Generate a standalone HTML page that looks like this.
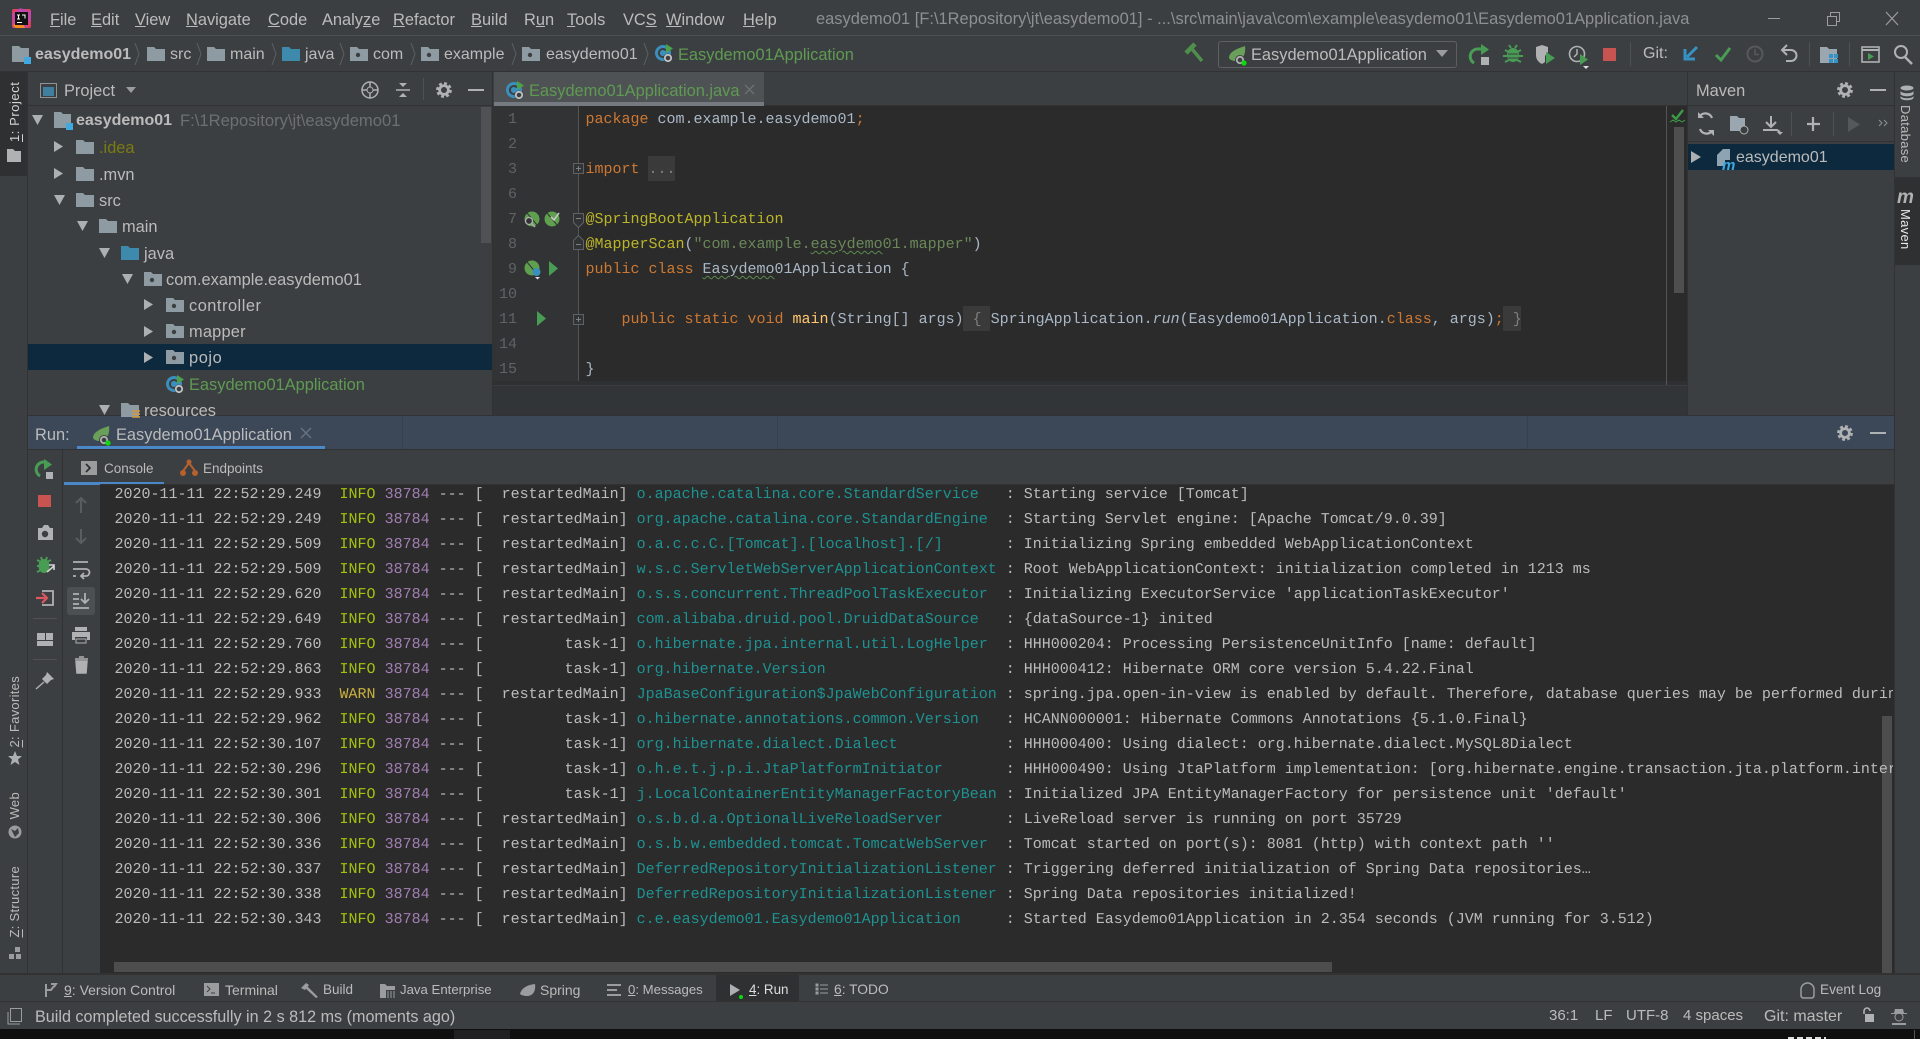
<!DOCTYPE html>
<html><head><meta charset="utf-8"><title>IntelliJ IDEA</title>
<style>
html,body{margin:0;padding:0;width:1920px;height:1039px;overflow:hidden;background:#3c3f41}
.b{position:absolute}
.t{position:absolute;white-space:pre;font:16.4px/20px "Liberation Sans",sans-serif;color:#bbb;margin-top:1px}
.u{font-size:16px}
.m{position:absolute;white-space:pre;font:15px/25px "Liberation Mono",monospace;color:#a9b7c6;text-rendering:geometricPrecision}
.s{font-size:14px;margin-top:0}.g{color:#5f9a52}.w{color:#8d9092}
.v{position:absolute;writing-mode:vertical-rl;white-space:pre;font:13px/18px "Liberation Sans",sans-serif;letter-spacing:.3px;color:#bbb}
.r{transform:rotate(180deg)}
.k{color:#cc7832}.a{color:#bbb529}.q{color:#6a8759}.f{color:#ffc66d}
.wv{text-decoration:underline wavy #5c8a4e 1px;text-underline-offset:2px}
#log{left:114.5px;top:482px;width:1778px;height:460px;overflow:hidden;color:#bbb;position:absolute;font:15px/25px "Liberation Mono",monospace;white-space:pre;text-rendering:geometricPrecision}
#log div{height:25px}
.i{color:#a5c10f}.wn{color:#c9b03c}.p{color:#a37fb4}.c{color:#1f9191}
.n{position:absolute;width:30px;text-align:right;left:487px;font:15px/25px "Liberation Mono",monospace;color:#606366}
svg{position:absolute;left:0;top:0}
</style></head>
<body>
<!-- structural backgrounds -->
<div class="b" style="left:0;top:35px;width:1920px;height:1px;background:#4d5052"></div>
<div class="b" style="left:0;top:71px;width:1920px;height:1px;background:#323232"></div>
<div class="b" style="left:0;top:72px;width:27px;height:104px;background:#2e3031"></div>
<div class="b" style="left:27px;top:72px;width:1px;height:901px;background:#323232"></div>
<div class="b" style="left:28px;top:105px;width:464px;height:1px;background:#323232"></div>
<div class="b" style="left:28px;top:344px;width:464px;height:26px;background:#0d293e"></div>
<div class="b" style="left:481px;top:107px;width:10px;height:136px;background:#4f5254"></div>
<div class="b" style="left:492px;top:72px;width:1px;height:343px;background:#323232"></div>
<div class="b" style="left:494px;top:72px;width:270px;height:30px;background:#4e5254"></div>
<div class="b" style="left:494px;top:102px;width:270px;height:4px;background:#747a80"></div>
<div class="b" style="left:764px;top:105px;width:923px;height:1px;background:#323232"></div>
<div class="b" style="left:493px;top:106px;width:1194px;height:275px;background:#2b2b2b"></div>
<div class="b" style="left:493px;top:106px;width:85px;height:279px;background:#313335"></div>
<div class="b" style="left:578px;top:106px;width:1px;height:279px;background:#555"></div>
<div class="b" style="left:493px;top:381px;width:1194px;height:4px;background:#2f3031"></div>
<div class="b" style="left:493px;top:385px;width:1194px;height:30px;background:#323537;border-top:1px solid #3a3c3e;box-sizing:border-box"></div>
<div class="b" style="left:1666px;top:106px;width:1px;height:279px;background:#555"></div>
<div class="b" style="left:1674px;top:127px;width:10px;height:166px;background:#4f4f4f"></div>
<div class="b" style="left:648px;top:156px;width:27px;height:25px;background:#3a3a3a"></div>
<div class="b" style="left:963px;top:306px;width:27px;height:25px;background:#3a3a3a"></div>
<div class="b" style="left:1503px;top:306px;width:18px;height:25px;background:#3a3a3a"></div>
<div class="b" style="left:1687px;top:72px;width:1px;height:343px;background:#323232"></div>
<div class="b" style="left:1688px;top:105px;width:206px;height:1px;background:#323232"></div>
<div class="b" style="left:1688px;top:141px;width:206px;height:1px;background:#323232"></div>
<div class="b" style="left:1688px;top:144px;width:206px;height:26px;background:#0d293e"></div>
<div class="b" style="left:1894px;top:72px;width:1px;height:901px;background:#323232"></div>
<div class="b" style="left:1895px;top:177px;width:25px;height:88px;background:#2e3031"></div>
<!-- run panel -->
<div class="b" style="left:28px;top:415px;width:1866px;height:1px;background:#323232"></div>
<div class="b" style="left:28px;top:416px;width:1866px;height:33px;background:#3c4757"></div>
<div class="b" style="left:28px;top:449px;width:1866px;height:1px;background:#323232"></div>
<div class="b" style="left:402px;top:416px;width:1px;height:33px;background:#363f4c"></div>
<div class="b" style="left:777px;top:416px;width:1px;height:33px;background:#363f4c"></div>
<div class="b" style="left:1527px;top:416px;width:1px;height:33px;background:#363f4c"></div>
<div class="b" style="left:77px;top:446px;width:248px;height:3px;background:#4a88c7"></div>
<div class="b" style="left:64px;top:482px;width:100px;height:3px;background:#4a88c7"></div>
<div class="b" style="left:100px;top:484px;width:1794px;height:1px;background:#323232"></div>
<div class="b" style="left:100px;top:485px;width:1794px;height:488px;background:#2b2b2b"></div>
<div class="b" style="left:62px;top:450px;width:1px;height:523px;background:#323232"></div>
<div class="b" style="left:114px;top:962px;width:1218px;height:10px;background:#4d4d4d"></div>
<div class="b" style="left:1882px;top:716px;width:10px;height:257px;background:#4d4d4d"></div>
<div class="b" style="left:67px;top:587px;width:28px;height:28px;border-radius:3px;background:#4c5052"></div>
<div class="b" style="left:33px;top:618px;width:24px;height:1px;background:#515151"></div>
<div class="b" style="left:33px;top:659px;width:24px;height:1px;background:#515151"></div>
<!-- bottom -->
<div class="b" style="left:0;top:973px;width:1920px;height:2px;background:#323232"></div>
<div class="b" style="left:716px;top:975px;width:83px;height:26px;background:#2e3031"></div>
<div class="b" style="left:0;top:1001px;width:1920px;height:1px;background:#323232"></div>
<div class="b" style="left:0;top:1029px;width:1920px;height:10px;background:#0f0f10"></div>
<div class="b" style="left:454px;top:1030px;width:56px;height:9px;background:#202022"></div>
<div class="b" style="left:1914px;top:1030px;width:1px;height:9px;background:#555"></div>
<div class="b" style="left:1788px;top:1037px;width:38px;height:2px;background:repeating-linear-gradient(90deg,#ddd 0 6px,transparent 6px 9px)"></div>
<!-- toolbar separators -->
<div class="b" style="left:1630px;top:42px;width:1px;height:24px;background:#515151"></div>
<div class="b" style="left:1809px;top:42px;width:1px;height:24px;background:#515151"></div>
<div class="b" style="left:1849px;top:42px;width:1px;height:24px;background:#515151"></div>
<div class="b" style="left:423px;top:78px;width:1px;height:22px;background:#515151"></div>
<div class="b" style="left:1791px;top:112px;width:1px;height:24px;background:#515151"></div>
<div class="b" style="left:1833px;top:112px;width:1px;height:24px;background:#515151"></div>
<div class="b" style="left:1218px;top:41px;width:237px;height:25px;border:1px solid #5e6060;border-radius:3px"></div>

<svg width="1920" height="1039" xmlns="http://www.w3.org/2000/svg" fill="none">
<defs>
<path id="fo" d="M0 0h7l2 2h9v12H0z" fill="#8f9ba3"/>
<g id="pk"><path d="M0 0h7l2 2h9v12H0z" fill="#8f9ba3"/><circle cx="8" cy="8" r="2.2" fill="#3c3f41"/></g>
<g id="mod"><path d="M0 0h7l2 2h8v14H0z" fill="#8f9ba3"/><rect x="12" y="11" width="7" height="7" fill="#3fa9e0"/></g>
<path id="down" d="M0 0h11L5.500 10z" fill="#adb0b2"/>
<path id="right" d="M0 0l9 5.500L0 11z" fill="#adb0b2"/>
<path id="chev" d="M0 0l4 11L0 22" stroke="#5d6062" stroke-width="1"/>
<g id="cls"><circle cx="8" cy="9" r="8" fill="#3a8fbd"/><path d="M11 6.500a4 4 0 1 0 0 5" stroke="#3c3f41" stroke-width="2"/><path d="M11 0l7 4.500-7 4.500z" fill="#4ca24a"/><circle cx="13" cy="14" r="4.500" fill="#3c3f41"/><circle cx="13" cy="14" r="3.200" stroke="#c0c2c4" stroke-width="1.800"/></g>
<g id="sp"><path d="M1 12C1 6 8 3 17 0c1 8-2 14-9 15-3 0-6-1-7-3z" fill="#6a9f5a"/><circle cx="12" cy="14" r="5" fill="#3c3f41"/><circle cx="12" cy="14" r="3.200" stroke="#afb1b3" stroke-width="1.800"/><circle cx="16" cy="17" r="2.600" fill="#0adb0a"/></g>
<g id="gear"><circle cx="8" cy="8" r="6.400" stroke="#afb1b3" stroke-width="3" stroke-dasharray="2.800 2.200"/><circle cx="8" cy="8" r="4.400" stroke="#afb1b3" stroke-width="2.800"/></g>
</defs>

<!-- logo -->
<rect x="12" y="9" width="19" height="19" rx="2" fill="#f0405e" opacity=".9"/>
<path d="M12 14L20 8l11 3v8l-5 9H13z" fill="#b04bd8" opacity=".6"/>
<path d="M13 26l6-9 6 11h-9z" fill="#f58a1f"/>
<rect x="15" y="12" width="13" height="13" fill="#111"/>
<path d="M17 15h3M18.500 15v4M17 19h3M22 15h3v3.500M17 22.500h5" stroke="#fff" stroke-width="1"/>

<!-- window controls -->
<path d="M1768 18.500h12" stroke="#9a9c9e"/>
<path d="M1827.500 16.500h9v9h-9zM1830.500 16v-3.500h9v9H1837" stroke="#9a9c9e"/>
<path d="M1886 12l12 13M1898 12l-12 13" stroke="#9a9c9e" stroke-width="1.200"/>

<!-- breadcrumbs -->
<use href="#mod" x="12" y="46"/>
<use href="#chev" x="135" y="43"/>
<use href="#fo" x="147" y="47"/>
<use href="#chev" x="197" y="43"/>
<use href="#fo" x="207" y="47"/>
<use href="#chev" x="272" y="43"/>
<path d="M282 47h7l2 2h9v12h-18z" fill="#3d8aad"/>
<use href="#chev" x="340" y="43"/>
<use href="#pk" x="350" y="47"/>
<use href="#chev" x="411" y="43"/>
<use href="#pk" x="421" y="47"/>
<use href="#chev" x="512" y="43"/>
<use href="#pk" x="522" y="47"/>
<use href="#chev" x="644" y="43"/>
<use href="#cls" x="655" y="44"/>

<!-- right toolbar -->
<path d="M1192 49l10 12" stroke="#4e8f4c" stroke-width="3.400"/><path d="M1186 53l9-9" stroke="#4e8f4c" stroke-width="4.500"/>
<use href="#sp" x="1228" y="46"/>
<path d="M1436 50h12l-6 7z" fill="#9a9c9e"/>
<path d="M1474 63a7.500 7.500 0 0 1 4-14h5" stroke="#499c54" stroke-width="3"/><path d="M1481 44l8 5.500-8 5.500z" fill="#499c54"/><rect x="1481" y="57" width="8" height="8" fill="#afb1b3"/>
<ellipse cx="1513" cy="55" rx="6" ry="7" fill="#499c54"/><path d="M1505 50l4 2M1521 50l-4 2M1503 56h4M1523 56h-4M1505 62l4-2M1521 62l-4-2M1509 45l2 3M1517 45l-2 3" stroke="#499c54" stroke-width="2"/><path d="M1508 54h10M1508 58h10" stroke="#3c3f41"/>
<path d="M1536 47l6-2 6 2v5l-3 4v6l-3 2c-4-2-6-5-6-9z" fill="#afb1b3"/><path d="M1546 52l9 6-9 6z" fill="#499c54"/>
<circle cx="1577" cy="54" r="7.500" stroke="#afb1b3" stroke-width="1.600"/><path d="M1577 49v5l-3 3" stroke="#afb1b3" stroke-width="1.500"/><path d="M1580 54l8 5.500-8 5.500z" fill="#499c54"/><path d="M1583 66h6l-3 3z" fill="#ddd"/>
<rect x="1603" y="48" width="13" height="13" fill="#c75450"/>
<path d="M1697 47l-10 10M1685 49v10h10" stroke="#3592c4" stroke-width="3"/>
<path d="M1716 55l5 5 9-12" stroke="#499c54" stroke-width="3"/>
<circle cx="1755" cy="54" r="7.500" stroke="#565859" stroke-width="2"/><path d="M1755 49v5.500h4" stroke="#565859" stroke-width="1.600"/>
<path d="M1783 50h8a5 5 0 0 1 0 11h-5" stroke="#afb1b3" stroke-width="2"/><path d="M1787 45l-5 5 5 5" stroke="#afb1b3" stroke-width="2"/>
<path d="M1820 47h7l2 2h8v14h-17z" fill="#9aa7b0"/><rect x="1829" y="54" width="4" height="4" fill="#3592c4"/><rect x="1834" y="54" width="4" height="4" fill="#3592c4"/><rect x="1829" y="59" width="4" height="4" fill="#3592c4"/><rect x="1834" y="59" width="4" height="4" fill="#3592c4"/>
<rect x="1862" y="47" width="17" height="15" stroke="#afb1b3" stroke-width="1.600"/><path d="M1862 50h17" stroke="#afb1b3" stroke-width="2"/><path d="M1868 53l6 3.500-6 3.500z" fill="#499c54"/>
<circle cx="1901" cy="52" r="6" stroke="#afb1b3" stroke-width="2"/><path d="M1905 57l7 7" stroke="#afb1b3" stroke-width="2.400"/>

<!-- project header -->
<rect x="40.500" y="83.500" width="16" height="14" stroke="#8f9295"/><rect x="43" y="87" width="11" height="9" fill="#3f7fa0"/>
<path d="M126 87h10l-5 6z" fill="#9a9c9e"/>
<circle cx="370" cy="90" r="8" stroke="#afb1b3" stroke-width="1.500"/><circle cx="370" cy="90" r="3" stroke="#afb1b3" stroke-width="1"/><path d="M370 82v5M370 93v5M362 90h5M373 90h5" stroke="#afb1b3" stroke-width="1.500"/>
<path d="M396 90h14" stroke="#afb1b3" stroke-width="1.500"/><path d="M399 83h8l-4 4zM399 97h8l-4-4z" fill="#afb1b3"/>
<use href="#gear" x="436" y="82"/>
<path d="M468 90h16" stroke="#afb1b3" stroke-width="2"/>

<!-- tree -->
<use href="#down" x="32" y="115"/><use href="#mod" x="54" y="112"/>
<use href="#right" x="54" y="141"/><use href="#fo" x="76" y="140"/>
<use href="#right" x="54" y="168"/><use href="#fo" x="76" y="167"/>
<use href="#down" x="54" y="195"/><use href="#fo" x="76" y="193"/>
<use href="#down" x="77" y="221"/><use href="#fo" x="99" y="219"/>
<use href="#down" x="99" y="248"/><path d="M121 246h7l2 2h9v12h-18z" fill="#3d8aad"/>
<use href="#down" x="122" y="274"/><use href="#pk" x="144" y="272"/>
<use href="#right" x="144" y="299"/><use href="#pk" x="166" y="298"/>
<use href="#right" x="144" y="326"/><use href="#pk" x="166" y="324"/>
<use href="#right" x="144" y="352"/><use href="#pk" x="166" y="350"/>
<use href="#cls" x="166" y="375"/>
<use href="#down" x="99" y="405"/><use href="#fo" x="121" y="403"/><path d="M132 411h8M132 414h8M132 417h8" stroke="#d69a3c" stroke-width="1.500"/>

<!-- editor tab icon -->
<use href="#cls" x="506" y="81"/>
<path d="M745 85l9 9M754 85l-9 9" stroke="#6d7072" stroke-width="1.300"/>

<!-- gutter -->
<g stroke="#5f6264" fill="#313335">
<rect x="573.500" y="163.500" width="10" height="10"/>
<path d="M573.500 213.500h10v9l-5 5-5-5z"/>
<path d="M573.500 249.500h10v-9l-5-5-5 5z"/>
<rect x="573.500" y="314.500" width="10" height="10"/>
</g>
<path d="M576 168.500h5M578.500 166v5M576 218.500h5M576 244.500h5M576 319.500h5M578.500 317v5" stroke="#7d8082"/>
<circle cx="532" cy="219" r="7.500" fill="#5fa04e"/><path d="M527 213l10 12" stroke="#313335" stroke-width="1"/><circle cx="529" cy="221" r="3.500" fill="#313335" stroke="#afb1b3" stroke-width="1.300"/><path d="M532 224l3 3" stroke="#afb1b3" stroke-width="1.500"/>
<circle cx="552" cy="219" r="7.500" fill="#5fa04e"/><path d="M547 213l10 12" stroke="#313335" stroke-width="1"/><path d="M551 217l3 3 5-7" stroke="#c8c8c8" stroke-width="1.600"/>
<circle cx="532" cy="268" r="7.500" fill="#5fa04e"/><path d="M527 262l10 12" stroke="#313335" stroke-width="1"/><circle cx="536.500" cy="272" r="4" fill="#3a8fbd"/><path d="M535 277h5l-2.500 2.500z" fill="#ddd"/>
<path d="M549 261l9 7.500-9 7.500z" fill="#499c54"/>
<path d="M537 311l9 7.500-9 7.500z" fill="#499c54"/>

<!-- editor check -->
<path d="M1672 115l4 4 7-9" stroke="#3c9d46" stroke-width="2.400"/><path d="M1670 122l3-2 3 2 3-2 3 2 3-2" stroke="#3c9d46"/>

<!-- maven -->
<use href="#gear" x="1837" y="82"/>
<path d="M1870 90h16" stroke="#afb1b3" stroke-width="2"/>
<path d="M1712 118a7 7 0 0 0-12-2M1700 129a7 7 0 0 0 12 2" stroke="#afb1b3" stroke-width="2.200"/><path d="M1698 112v6h6M1714 136v-6h-6" fill="#afb1b3"/>
<path d="M1730 116h7l2 2h6v13h-15z" fill="#9aa7b0"/><circle cx="1744" cy="130" r="4" stroke="#afb1b3" fill="#3c3f41"/>
<path d="M1771 116v10M1766 122l5 5 5-5" stroke="#afb1b3" stroke-width="2"/><path d="M1763 130h14l3 2" stroke="#afb1b3" stroke-width="2"/><path d="M1777 132h6l-3 3z" fill="#afb1b3"/>
<path d="M1813 117v14M1807 124h13" stroke="#afb1b3" stroke-width="2.200"/>
<path d="M1848 117l12 7.500-12 7.500z" fill="#55585a"/>
<path d="M1879 120l3 3-3 3M1884 120l3 3-3 3" stroke="#8f9295"/>
<path d="M1691 151l10 6-10 6z" fill="#adb0b2"/>
<path d="M1723 149h7v11h-5v6h-8v-11z" fill="#8fa4b2"/>
<text x="1722" y="170" font-family="Liberation Sans" font-size="15" font-weight="bold" font-style="italic" fill="#3fa9e0">m</text>

<!-- right stripe icons -->
<ellipse cx="1907" cy="88" rx="6.500" ry="2.500" fill="#adb0b2"/><path d="M1900.500 91c1 3 12 3 13 0v3c-1 3-12 3-13 0zM1900.500 96c1 3 12 3 13 0v2c-1 3-12 3-13 0z" fill="#adb0b2"/>
<text x="1897" y="203" font-family="Liberation Sans" font-size="19" font-weight="bold" font-style="italic" fill="#afb1b3">m</text>

<!-- left stripe icons -->
<path d="M7 149h6l2 2h6v11H7z" fill="#afb1b3"/>
<path d="M15 751l2 5h5l-4 3.500 1.500 5.500-4.500-3-4.500 3 1.500-5.500-4-3.500h5z" fill="#adb0b2"/>
<circle cx="15" cy="832" r="6.500" fill="#9a9c9e"/><path d="M11 829l4 2 3-3 1 5-4 4-2-4z" fill="#3c3f41"/>
<rect x="9" y="954" width="5" height="5" fill="#9a9c9e"/><rect x="16" y="954" width="5" height="5" fill="#9a9c9e"/><rect x="15" y="947" width="5" height="5" fill="#9a9c9e"/>

<!-- run tab -->
<use href="#sp" x="92" y="426"/>
<path d="M301 428l10 10M311 428l-10 10" stroke="#6b7580" stroke-width="1.300"/>
<use href="#gear" x="1837" y="425"/>
<path d="M1870 433h16" stroke="#afb1b3" stroke-width="2"/>
<!-- console tabs -->
<rect x="81" y="461" width="16" height="14" fill="#9a9c9e"/><path d="M86 464l4 4-4 4" stroke="#2b2b2b" stroke-width="1.600"/>
<path d="M189 463l-6 8M189 463l6 8" stroke="#b5612f" stroke-width="2"/><circle cx="189" cy="462" r="2.500" fill="#b5612f"/><circle cx="183" cy="473" r="3" fill="#b5612f"/><circle cx="195" cy="473" r="3" fill="#b5612f"/>
<!-- console toolbar col 1 -->
<path d="M40 476a7.500 7.500 0 0 1 3-14h4" stroke="#499c54" stroke-width="3"/><path d="M44 459l8 5.500-8 5.500z" fill="#499c54"/><rect x="46" y="472" width="7" height="7" fill="#afb1b3"/>
<rect x="38" y="495" width="13" height="12" fill="#c75450"/>
<path d="M38 528h4l2-3h4l2 3h3v12H38z" fill="#afb1b3"/><circle cx="45" cy="534" r="3.200" fill="#3c3f41"/>
<ellipse cx="44" cy="566" rx="5.500" ry="7" fill="#499c54"/><path d="M37 560l4 2M37 566h4M37 572l4-2M51 560l-4 2M41 557l1 3M47 557l-1 3" stroke="#499c54" stroke-width="2"/><path d="M47 572l7-6M49 565h5v5" stroke="#d5d5d5" stroke-width="1.600"/>
<path d="M42 591h11v14H42" stroke="#afb1b3" stroke-width="1.800"/><path d="M36 598h9M42 593l5 5-5 5" stroke="#db5860" stroke-width="2.200"/>
<rect x="37" y="633" width="8" height="7" fill="#afb1b3"/><rect x="46" y="633" width="7" height="7" fill="#afb1b3"/><rect x="37" y="641" width="16" height="5" fill="#afb1b3"/>
<path d="M47 672l7 7-3 1-4 4-5-5 4-4z" fill="#afb1b3"/><path d="M44 682l-8 7" stroke="#afb1b3" stroke-width="1.400"/>
<!-- col 2 -->
<path d="M81 513v-14M76 503l5-5 5 5" stroke="#5a5d5f" stroke-width="2"/>
<path d="M81 529v14M76 538l5 5 5-5" stroke="#5a5d5f" stroke-width="2"/>
<path d="M73 562h15M73 569h13a3 3 0 0 1 0 7h-5M84 573l-3 3 3 3M73 576h3" stroke="#afb1b3" stroke-width="1.800"/>
<path d="M73 594h6M73 599h6M73 604h6M73 608h16" stroke="#afb1b3" stroke-width="1.800"/><path d="M85 593v10M81 599l4 4 4-4" stroke="#afb1b3" stroke-width="1.800"/>
<rect x="75" y="627" width="12" height="4" fill="#afb1b3"/><path d="M72 632h18v8h-3v-3H75v3h-3z" fill="#afb1b3"/><rect x="76" y="639" width="10" height="4" stroke="#afb1b3"/>
<path d="M76 661h11l-1 12H77zM75 659h13M79 657h5" stroke="#afb1b3" stroke-width="1.500" fill="#afb1b3"/>
<!-- bottom bar icons -->
<path d="M46 984v13M46 990h5l3-4M51 984h5l-2 3" stroke="#9a9c9e" stroke-width="2"/>
<rect x="204" y="983" width="15" height="13" fill="#9a9c9e"/><path d="M207 986l3 3-3 3M211 993h4" stroke="#3c3f41"/>
<path d="M301 988l5-5 3 2-4 5zM306 985l12 12-2 1-12-11z" fill="#9a9c9e"/>
<path d="M380 984h5l2 2h8v12h-15z" fill="#9a9c9e"/><rect x="386" y="990" width="9" height="8" fill="#3c3f41"/><path d="M388 991v7M391 991v7M394 991v7" stroke="#9a9c9e"/>
<path d="M520 994C521 989 526 985 535 984c1 7-2 12-8 12-3 0-6-1-7-2z" fill="#9a9c9e"/>
<rect x="607" y="984" width="14" height="2" fill="#9a9c9e"/><rect x="607" y="989" width="10" height="2" fill="#9a9c9e"/><rect x="607" y="994" width="14" height="2" fill="#9a9c9e"/>
<path d="M730 984l10 6-10 6z" fill="#adb0b2"/><circle cx="741" cy="997" r="2" fill="#0adb0a"/>
<path d="M816 984h2v2h-2zM816 988h2v2h-2zM816 992h2v2h-2zM820 985h8M820 989h8M820 993h8" stroke="#9a9c9e" fill="#9a9c9e"/>
<path d="M1803 998h9a3 3 0 0 0 2-3v-5a6.500 6.500 0 0 0-13-1v6a3 3 0 0 0 2 3z" stroke="#9a9c9e" stroke-width="1.500"/>
<!-- status icons -->
<rect x="10.500" y="1008.500" width="11" height="13" stroke="#9a9c9e"/><path d="M8 1012v12h12" stroke="#9a9c9e"/>
<path d="M1864 1014v-3a3 3 0 0 1 6 0" stroke="#afb1b3" stroke-width="1.600"/><rect x="1865" y="1014" width="9" height="8" fill="#afb1b3"/>
<path d="M1895 1009h8l1 4h3v1h-16v-1h3z" fill="#9a9c9e"/><circle cx="1899" cy="1017" r="4" stroke="#9a9c9e"/><path d="M1892 1024h14" stroke="#9a9c9e" stroke-width="2"/>
</svg>

<!-- menu -->
<span class="t" style="left:50px;top:9px"><u>F</u>ile</span>
<span class="t" style="left:91px;top:9px"><u>E</u>dit</span>
<span class="t" style="left:135px;top:9px"><u>V</u>iew</span>
<span class="t" style="left:186px;top:9px"><u>N</u>avigate</span>
<span class="t" style="left:268px;top:9px"><u>C</u>ode</span>
<span class="t" style="left:322px;top:9px">Analy<u>z</u>e</span>
<span class="t" style="left:393px;top:9px"><u>R</u>efactor</span>
<span class="t" style="left:471px;top:9px"><u>B</u>uild</span>
<span class="t" style="left:524px;top:9px">R<u>u</u>n</span>
<span class="t" style="left:567px;top:9px"><u>T</u>ools</span>
<span class="t" style="left:623px;top:9px">VC<u>S</u></span>
<span class="t" style="left:666px;top:9px"><u>W</u>indow</span>
<span class="t" style="left:743px;top:9px"><u>H</u>elp</span>
<span class="t" style="left:816px;top:8px;color:#8d9092;letter-spacing:.03px">easydemo01 [F:\1Repository\jt\easydemo01] - ...\src\main\java\com\example\easydemo01\Easydemo01Application.java</span>

<!-- breadcrumbs -->
<span class="t u" style="left:35px;top:44px;font-weight:bold">easydemo01</span>
<span class="t u" style="left:170px;top:44px">src</span>
<span class="t u" style="left:230px;top:44px">main</span>
<span class="t u" style="left:305px;top:44px">java</span>
<span class="t u" style="left:373px;top:44px">com</span>
<span class="t u" style="left:444px;top:44px">example</span>
<span class="t u" style="left:546px;top:44px">easydemo01</span>
<span class="t g" style="left:678px;top:44px">Easydemo01Application</span>
<span class="t" style="left:1251px;top:44px">Easydemo01Application</span>
<span class="t u" style="left:1643px;top:43px">Git:</span>

<!-- project -->
<span class="t" style="left:64px;top:80px">Project</span>
<span class="t u" style="left:76px;top:110px;font-weight:bold">easydemo01</span>
<span class="t" style="left:180px;top:110px;color:#6d7072;font-size:16.600px">F:\1Repository\jt\easydemo01</span>
<span class="t" style="left:99px;top:137px;color:#7b7b12">.idea</span>
<span class="t" style="left:99px;top:164px">.mvn</span>
<span class="t" style="left:99px;top:190px">src</span>
<span class="t" style="left:122px;top:216px">main</span>
<span class="t" style="left:144px;top:243px">java</span>
<span class="t" style="left:166px;top:269px">com.example.easydemo01</span>
<span class="t" style="left:189px;top:295px;letter-spacing:.5px">controller</span>
<span class="t" style="left:189px;top:321px;letter-spacing:.2px">mapper</span>
<span class="t" style="left:189px;top:347px;letter-spacing:.6px">pojo</span>
<span class="t g" style="left:189px;top:374px">Easydemo01Application</span>
<span class="t" style="left:144px;top:400px">resources</span>

<!-- editor tab -->
<span class="t g" style="left:529px;top:80px">Easydemo01Application.java</span>

<!-- line numbers -->
<span class="n" style="top:107px">1</span><span class="n" style="top:132px">2</span><span class="n" style="top:157px">3</span><span class="n" style="top:182px">6</span><span class="n" style="top:207px">7</span><span class="n" style="top:232px">8</span><span class="n" style="top:257px">9</span><span class="n" style="top:282px">10</span><span class="n" style="top:307px">11</span><span class="n" style="top:332px">14</span><span class="n" style="top:357px">15</span>

<!-- code -->
<div class="m" style="left:585.500px;top:107px"><span class="k">package</span> com.example.easydemo01<span class="k">;</span></div>
<div class="m" style="left:585.500px;top:157px"><span class="k">import</span> <span style="color:#808080">...</span></div>
<div class="m a" style="left:585.500px;top:207px">@SpringBootApplication</div>
<div class="m" style="left:585.500px;top:232px"><span class="a">@MapperScan</span>(<span class="q">"com.example.<span class="wv">easydemo</span>01.mapper"</span>)</div>
<div class="m" style="left:585.500px;top:257px"><span class="k">public class </span><span class="wv">Easydemo</span>01Application {</div>
<div class="m" style="left:585.500px;top:307px">    <span class="k">public static void </span><span class="f">main</span>(String[] args)<span style="color:#7f7f7f"> { </span>SpringApplication.<i>run</i>(Easydemo01Application.<span class="k">class</span>, args)<span class="k">;</span><span style="color:#7f7f7f"> }</span></div>
<div class="m" style="left:585.500px;top:357px">}</div>

<!-- maven -->
<span class="t" style="left:1696px;top:80px">Maven</span>
<span class="t u" style="left:1736px;top:147px">easydemo01</span>

<!-- stripes -->
<span class="v r" style="left:6px;top:82px;height:60px;color:#d5d5d5;letter-spacing:.55px"><u>1</u>: Project</span>
<span class="v r" style="left:6px;top:676px"><u>2</u>: Favorites</span>
<span class="v r" style="left:6px;top:792px">Web</span>
<span class="v r" style="left:6px;top:866px"><u>Z</u>: Structure</span>
<span class="v" style="left:1896px;top:105px">Database</span>
<span class="v" style="left:1896px;top:209px;color:#e8e8e8">Maven</span>

<!-- run -->
<span class="t" style="left:35px;top:424px">Run:</span>
<span class="t" style="left:116px;top:424px">Easydemo01Application</span>
<span class="t" style="left:104px;top:458px;font-size:13.500px">Console</span>
<span class="t" style="left:203px;top:458px;font-size:13.500px">Endpoints</span>

<div id="log"><div>2020-11-11 22:52:29.249  <span class="i">INFO</span> <span class="p">38784</span> --- [  restartedMain] <span class="c">o.apache.catalina.core.StandardService  </span> : Starting service [Tomcat]</div><div>2020-11-11 22:52:29.249  <span class="i">INFO</span> <span class="p">38784</span> --- [  restartedMain] <span class="c">org.apache.catalina.core.StandardEngine </span> : Starting Servlet engine: [Apache Tomcat/9.0.39]</div><div>2020-11-11 22:52:29.509  <span class="i">INFO</span> <span class="p">38784</span> --- [  restartedMain] <span class="c">o.a.c.c.C.[Tomcat].[localhost].[/]      </span> : Initializing Spring embedded WebApplicationContext</div><div>2020-11-11 22:52:29.509  <span class="i">INFO</span> <span class="p">38784</span> --- [  restartedMain] <span class="c">w.s.c.ServletWebServerApplicationContext</span> : Root WebApplicationContext: initialization completed in 1213 ms</div><div>2020-11-11 22:52:29.620  <span class="i">INFO</span> <span class="p">38784</span> --- [  restartedMain] <span class="c">o.s.s.concurrent.ThreadPoolTaskExecutor </span> : Initializing ExecutorService 'applicationTaskExecutor'</div><div>2020-11-11 22:52:29.649  <span class="i">INFO</span> <span class="p">38784</span> --- [  restartedMain] <span class="c">com.alibaba.druid.pool.DruidDataSource  </span> : {dataSource-1} inited</div><div>2020-11-11 22:52:29.760  <span class="i">INFO</span> <span class="p">38784</span> --- [         task-1] <span class="c">o.hibernate.jpa.internal.util.LogHelper </span> : HHH000204: Processing PersistenceUnitInfo [name: default]</div><div>2020-11-11 22:52:29.863  <span class="i">INFO</span> <span class="p">38784</span> --- [         task-1] <span class="c">org.hibernate.Version                   </span> : HHH000412: Hibernate ORM core version 5.4.22.Final</div><div>2020-11-11 22:52:29.933  <span class="wn">WARN</span> <span class="p">38784</span> --- [  restartedMain] <span class="c">JpaBaseConfiguration$JpaWebConfiguration</span> : spring.jpa.open-in-view is enabled by default. Therefore, database queries may be performed during view rendering</div><div>2020-11-11 22:52:29.962  <span class="i">INFO</span> <span class="p">38784</span> --- [         task-1] <span class="c">o.hibernate.annotations.common.Version  </span> : HCANN000001: Hibernate Commons Annotations {5.1.0.Final}</div><div>2020-11-11 22:52:30.107  <span class="i">INFO</span> <span class="p">38784</span> --- [         task-1] <span class="c">org.hibernate.dialect.Dialect           </span> : HHH000400: Using dialect: org.hibernate.dialect.MySQL8Dialect</div><div>2020-11-11 22:52:30.296  <span class="i">INFO</span> <span class="p">38784</span> --- [         task-1] <span class="c">o.h.e.t.j.p.i.JtaPlatformInitiator      </span> : HHH000490: Using JtaPlatform implementation: [org.hibernate.engine.transaction.jta.platform.internal.NoJtaPlatform]</div><div>2020-11-11 22:52:30.301  <span class="i">INFO</span> <span class="p">38784</span> --- [         task-1] <span class="c">j.LocalContainerEntityManagerFactoryBean</span> : Initialized JPA EntityManagerFactory for persistence unit 'default'</div><div>2020-11-11 22:52:30.306  <span class="i">INFO</span> <span class="p">38784</span> --- [  restartedMain] <span class="c">o.s.b.d.a.OptionalLiveReloadServer      </span> : LiveReload server is running on port 35729</div><div>2020-11-11 22:52:30.336  <span class="i">INFO</span> <span class="p">38784</span> --- [  restartedMain] <span class="c">o.s.b.w.embedded.tomcat.TomcatWebServer </span> : Tomcat started on port(s): 8081 (http) with context path ''</div><div>2020-11-11 22:52:30.337  <span class="i">INFO</span> <span class="p">38784</span> --- [  restartedMain] <span class="c">DeferredRepositoryInitializationListener</span> : Triggering deferred initialization of Spring Data repositories…</div><div>2020-11-11 22:52:30.338  <span class="i">INFO</span> <span class="p">38784</span> --- [  restartedMain] <span class="c">DeferredRepositoryInitializationListener</span> : Spring Data repositories initialized!</div><div>2020-11-11 22:52:30.343  <span class="i">INFO</span> <span class="p">38784</span> --- [  restartedMain] <span class="c">c.e.easydemo01.Easydemo01Application    </span> : Started Easydemo01Application in 2.354 seconds (JVM running for 3.512)</div></div>

<!-- bottom bar -->
<span class="t s" style="left:64px;top:980px"><u>9</u>: Version Control</span>
<span class="t s" style="left:225px;top:980px">Terminal</span>
<span class="t s" style="left:323px;top:980px;font-size:13.500px">Build</span>
<span class="t s" style="left:400px;top:980px;font-size:13.200px">Java Enterprise</span>
<span class="t s" style="left:540px;top:980px">Spring</span>
<span class="t s" style="left:628px;top:980px;font-size:13.200px"><u>0</u>: Messages</span>
<span class="t s" style="left:749px;top:980px;color:#ddd;font-size:13.400px"><u>4</u>: Run</span>
<span class="t s" style="left:834px;top:980px;font-size:13.800px"><u>6</u>: TODO</span>
<span class="t s" style="left:1820px;top:980px;font-size:13.600px">Event Log</span>
<span class="t" style="left:35px;top:1006px;font-size:16.160px">Build completed successfully in 2 s 812 ms (moments ago)</span>
<span class="t" style="left:1549px;top:1005px;font-size:15px">36:1</span>
<span class="t" style="left:1595px;top:1005px;font-size:15px">LF</span>
<span class="t" style="left:1626px;top:1005px;font-size:15px">UTF-8</span>
<span class="t" style="left:1683px;top:1005px;font-size:15px">4 spaces</span>
<span class="t" style="left:1764px;top:1006px;font-size:16px">Git: master</span>
</body></html>
